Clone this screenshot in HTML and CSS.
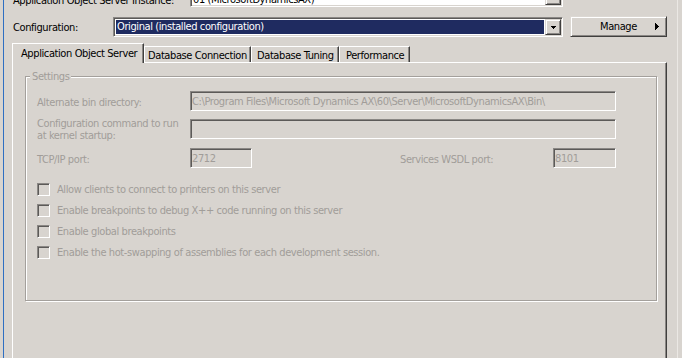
FILE: index.html
```html
<!DOCTYPE html>
<html>
<head>
<meta charset="utf-8">
<link rel="stylesheet" href="styles.css">
</head>
<body>
<div class="window">
  <div class="row-instance">
    <span class="lbl lbl-instance">Application Object Server Instance:</span>
    <div class="combo combo-instance sunken">
      <div class="combo-value">01 (MicrosoftDynamicsAX)</div>
      <span class="combo-btn raised"><svg width="5" height="3" viewBox="0 0 5 3" shape-rendering="crispEdges"><path d="M0 0H5V1H4V2H3V3H2V2H1V1H0Z" fill="#000"/></svg></span>
    </div>
  </div>
  <div class="row-config">
    <span class="lbl lbl-config">Configuration:</span>
    <div class="combo combo-config sunken">
      <div class="combo-sel">Original (installed configuration)</div>
      <span class="combo-btn raised"><svg width="5" height="3" viewBox="0 0 5 3" shape-rendering="crispEdges"><path d="M0 0H5V1H4V2H3V3H2V2H1V1H0Z" fill="#000"/></svg></span>
    </div>
    <div class="btn-manage raised">
      <span class="btn-text">Manage</span>
      <svg class="btn-arrow" width="4" height="7" viewBox="0 0 4 7" shape-rendering="crispEdges"><path d="M0 0H1V1H2V2H3V3H4V4H3V5H2V6H1V7H0Z" fill="#000"/></svg>
    </div>
  </div>
  <div class="tabs">
    <div class="tab tab-active">Application Object Server</div>
    <div class="tab tab-dbconn">Database Connection</div>
    <div class="tab tab-dbtune">Database Tuning</div>
    <div class="tab tab-perf">Performance</div>
  </div>
  <div class="panel">
    <div class="group">
      <span class="group-caption">Settings</span>
      <div class="frow frow-a">
        <span class="flbl">Alternate bin directory:</span>
        <div class="field sunken field-wide">C:\Program Files\Microsoft Dynamics AX\60\Server\MicrosoftDynamicsAX\Bin\</div>
      </div>
      <div class="frow frow-b">
        <span class="flbl flbl-two">Configuration command to run<br>at kernel startup:</span>
        <div class="field sunken field-wide"></div>
      </div>
      <div class="frow frow-c">
        <span class="flbl">TCP/IP port:</span>
        <div class="field sunken field-port">2712</div>
        <span class="flbl flbl-wsdl">Services WSDL port:</span>
        <div class="field sunken field-port2">8101</div>
      </div>
      <div class="checks">
        <label class="chk"><span class="box"></span><span>Allow clients to connect to printers on this server</span></label>
        <label class="chk"><span class="box"></span><span>Enable breakpoints to debug X++ code running on this server</span></label>
        <label class="chk"><span class="box"></span><span>Enable global breakpoints</span></label>
        <label class="chk"><span class="box"></span><span>Enable the hot-swapping of assemblies for each development session.</span></label>
      </div>
    </div>
  </div>
</div>
</body>
</html>
```

FILE: styles.css
```css
* { box-sizing: border-box; }
html, body { margin: 0; padding: 0; }
body {
  width: 682px;
  height: 358px;
  overflow: hidden;
  background: #d8d4cf;
  font-family: "DejaVu Sans Condensed", "DejaVu Sans", sans-serif;
  font-stretch: condensed;
  font-size: 11px;
  line-height: 13px;
  letter-spacing: -0.4px;
  color: #000;
  display: flex;
}

.window {
  flex: none;
  margin-left: 3px;
  width: 675px;
  height: 358px;
  border-left: 1px solid #2f6fc2;
  border-right: 1px solid #ebe8e4;
  padding: 0 10px 0 8px;
}

.sunken {
  border: 1px solid;
  border-color: #8a8784 #fff #fff #8a8784;
  box-shadow: inset 1px 1px 0 #5c5a58, inset -1px -1px 0 #d8d4cf;
}
.raised {
  border: 1px solid;
  border-color: #dcd8d3 #403f3e #403f3e #dcd8d3;
  box-shadow: inset 1px 1px 0 #fff, inset -1px -1px 0 #8a8784;
  background: #d8d4cf;
}

/* top row */
.row-instance {
  display: flex;
  height: 20px;
  margin-top: -13px;
}
.lbl { white-space: nowrap; }
.lbl-instance {
  width: 178px;
  padding-left: 1px;
  align-self: flex-end;
}
.combo {
  display: flex;
  height: 20px;
  padding: 1px;
  background: #fff;
}
.combo-instance { width: 373px; }
.combo-value {
  flex: 1;
  padding: 4px 0 0 1px;
  white-space: nowrap;
  overflow: visible;
}
.combo-btn {
  flex: none;
  width: 16px;
  height: 16px;
  display: flex;
  align-items: center;
  justify-content: center;
  padding-top: 1px;
}

/* configuration row */
.row-config {
  display: flex;
  align-items: flex-start;
  height: 21px;
  margin-top: 9px;
}
.lbl-config {
  width: 101px;
  padding-left: 1px;
  margin-top: 5px;
}
.combo-config {
  width: 450px;
  margin-top: 1px;
}
.combo-sel {
  flex: 1;
  margin: 1px;
  background: #1f2b60;
  color: #fff;
  padding-left: 1px;
  line-height: 14px;
  white-space: nowrap;
}
.btn-manage {
  width: 97px;
  height: 21px;
  margin-left: 7px;
  display: flex;
  align-items: center;
  padding: 0 7px 0 11px;
}
.btn-text {
  flex: 1;
  text-align: center;
}
.btn-arrow { flex: none; }

/* tabs */
.tabs {
  display: flex;
  align-items: flex-end;
  height: 19px;
  margin-top: 6px;
}
.tab {
  height: 16px;
  border: 1px solid;
  border-bottom: none;
  border-color: #fff #403f3e transparent #fff;
  box-shadow: inset -1px 0 0 #8a8784;
  padding-top: 2px;
  white-space: nowrap;
  flex: none;
}
.tab-active {
  position: relative;
  z-index: 1;
  width: 132px;
  height: 20px;
  margin-bottom: -1px;
  padding: 3px 0 0 8px;
  background: #d8d4cf;
}
.tab-dbconn { width: 107px; padding-left: 3px; }
.tab-dbtune { width: 88px; padding-left: 5px; }
.tab-perf { width: 71px; padding-left: 6px; }

/* panel */
.panel {
  height: 300px;
  border-top: 1px solid #fff;
  border-left: 1px solid #fff;
  border-right: 1px solid #403f3e;
  box-shadow: inset -1px 0 0 #8a8784;
  padding: 13px 9px 0 12px;
}
.group {
  height: 225px;
  border: 1px solid #a4a09c;
  box-shadow: 1px 1px 0 #fff, inset 1px 1px 0 #fff;
  padding: 0 0 0 11px;
  display: flex;
  flex-direction: column;
  align-items: flex-start;
  color: #a19d99;
}
.group-caption {
  margin: -7px 0 0 -7px;
  padding: 0 2px;
  background: #d8d4cf;
}

.frow {
  display: flex;
  align-items: flex-start;
  height: 20px;
}
.frow-a { margin-top: 8px; }
.frow-b { margin-top: 8px; }
.frow-c { margin-top: 9px; }
.flbl {
  flex: none;
  width: 153px;
  margin-top: 5px;
  white-space: nowrap;
}
.flbl-two {
  line-height: 12px;
  margin-top: -1px;
}
.flbl-wsdl { margin-left: 148px; }
.field {
  flex: none;
  height: 20px;
  padding: 3px 2px 0 1px;
  white-space: nowrap;
  overflow: hidden;
}
.field-wide { width: 426px; }
.field-port { width: 62px; }
.field-port2 { width: 63px; }

.checks {
  margin-top: 11px;
  display: flex;
  flex-direction: column;
}
.chk {
  display: flex;
  align-items: center;
  height: 21px;
  white-space: nowrap;
}
.box {
  flex: none;
  width: 13px;
  height: 13px;
  margin-right: 7px;
  border: 1px solid;
  border-color: #8a8784 #fff #fff #8a8784;
  box-shadow: inset 1px 1px 0 #5c5a58, inset -1px -1px 0 #d8d4cf;
  background: #d8d4cf;
}
```
